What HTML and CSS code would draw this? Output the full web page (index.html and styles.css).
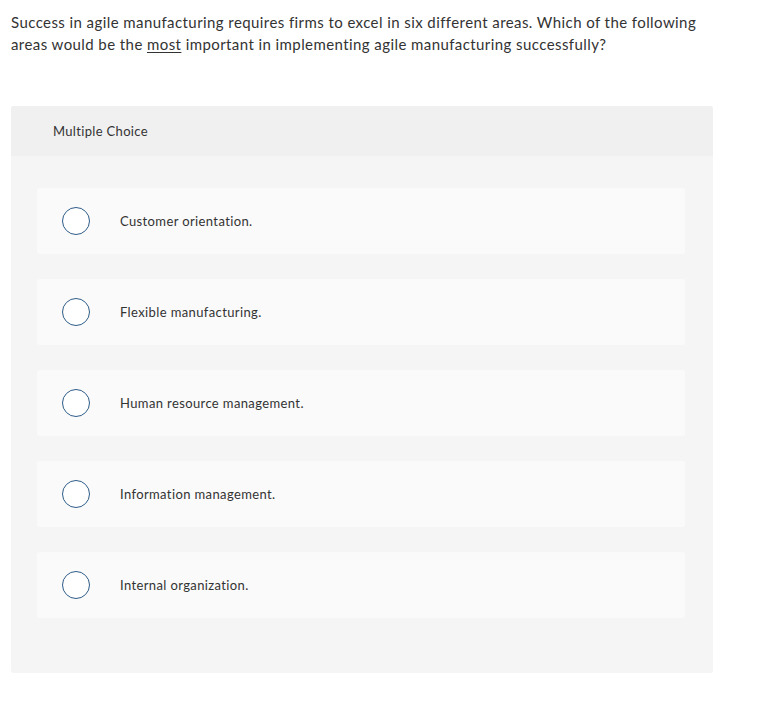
FILE: index.html
```html
<!DOCTYPE html>
<html>
<head>
<meta charset="utf-8">
<link rel="stylesheet" href="styles.css">
</head>
<body>
<div class="page">
  <p class="question">Success in agile manufacturing requires firms to excel in six different areas. Which of the following areas would be the <u>most</u> important in implementing agile manufacturing successfully?</p>
  <div class="panel">
    <div class="panel-head">Multiple Choice</div>
    <div class="panel-body">
      <div class="option"><span class="radio"></span><span class="label">Customer orientation.</span></div>
      <div class="option"><span class="radio"></span><span class="label">Flexible manufacturing.</span></div>
      <div class="option"><span class="radio"></span><span class="label">Human resource management.</span></div>
      <div class="option"><span class="radio"></span><span class="label">Information management.</span></div>
      <div class="option"><span class="radio"></span><span class="label">Internal organization.</span></div>
    </div>
  </div>
</div>
</body>
</html>
```

FILE: styles.css
```css
html, body {
  margin: 0;
  padding: 0;
  background: #ffffff;
}
body {
  font-family: Lato, "Liberation Sans", sans-serif;
  color: #333333;
}
.page {
  padding: 11px 11px 0 11px;
  width: 702px;
}
.question {
  margin: 0;
  font-size: 15px;
  line-height: 22px;
  letter-spacing: 0.42px;
  color: #333333;
  width: 700px;
}
.question u {
  text-decoration-thickness: 1px;
  text-underline-offset: 2px;
}
.panel {
  margin-top: 51px;
  width: 702px;
  border-radius: 3px;
  overflow: hidden;
  background: #f5f5f5;
}
.panel-head {
  height: 50px;
  background: #f0f0f0;
  display: flex;
  align-items: center;
  padding-left: 42px;
  font-size: 13px;
  letter-spacing: 0.33px;
  color: #333;
}
.panel-body {
  padding: 32px 28px 55px 26px;
  display: flex;
  flex-direction: column;
  gap: 25px;
}
.option {
  height: 66px;
  background: #fafafa;
  border-radius: 3px;
  display: flex;
  align-items: center;
}
.radio {
  box-sizing: border-box;
  width: 28px;
  height: 28px;
  border: 1.5px solid #2e5c88;
  border-radius: 50%;
  margin-left: 25px;
  background: #fff;
}
.label {
  margin-left: 30px;
  font-size: 13px;
  letter-spacing: 0.38px;
  color: #333;
}
```
